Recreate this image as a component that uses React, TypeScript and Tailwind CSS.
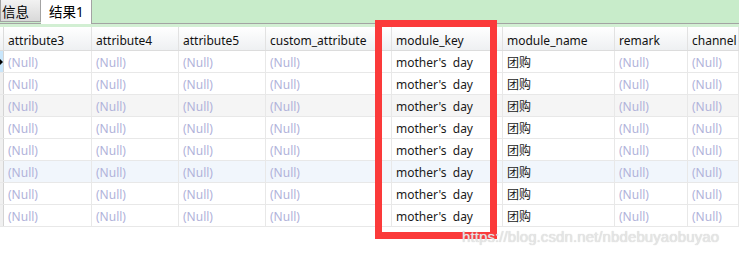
import React from 'react';

const FONT = { fontFamily: '"Noto Sans", "Noto Sans CJK SC", sans-serif' };

const columns = [
    { key: 'attribute3', w: 'w-[88px]' },
    { key: 'attribute4', w: 'w-[87px]' },
    { key: 'attribute5', w: 'w-[87px]' },
    { key: 'custom_attribute', w: 'w-[126px]' },
    { key: 'module_key', w: 'w-[111px]' },
    { key: 'module_name', w: 'w-[112px]' },
    { key: 'remark', w: 'w-[73px]' },
    { key: 'channel', w: 'flex-1' },
];

const rowBg = ['bg-white', 'bg-white', 'bg-[#f5f5f5]', 'bg-white', 'bg-white', 'bg-[#f1f6fc]', 'bg-white', 'bg-white'];

const cellValue = (key: string) => {
    if (key === 'module_key') return <span className="text-[#1a1a1a] whitespace-pre">mother's  day</span>;
    if (key === 'module_name') return <span className="text-[#1a1a1a]">团购</span>;
    return <span className="text-[#b0b2da]">(Null)</span>;
};

const App: React.FC = () => {
    return (
        <div className="relative w-[739px] h-[256px] bg-white overflow-hidden text-[12px]" style={FONT}>
            {/* tabs */}
            <div className="flex h-[24px] bg-[#c8ecca] border-b border-[#a3a3a3]">
                <div className="w-[41px] h-[22px] flex items-center pl-[1px] pt-[3px] bg-gradient-to-b from-[#f2f2f2] to-[#d9d9d9] border border-[#a3a3a3] border-t-0 text-[13.5px] text-black">
                    信息
                </div>
                <div className="w-[51px] h-[24px] flex items-center pl-[8px] pt-[1px] bg-white border-r border-[#a3a3a3] text-[13.5px] text-black">
                    结果1
                </div>
            </div>
            <div className="h-[3px] bg-[#d2efd3]" />

            {/* header */}
            <div className="flex h-[24px] bg-gradient-to-b from-white to-[#eef0f2] border-b border-[#dcdcdc]">
                <div className="w-[4px] border-r border-[#dcdcdc]" />
                {columns.map(c => (
                    <div key={c.key} className={`${c.w} shrink-0 border-r border-[#e2e2e2] pl-[4px] pt-[4px] flex items-center text-[#111]`}>
                        {c.key}
                    </div>
                ))}
            </div>

            {/* rows */}
            {rowBg.map((bg, i) => (
                <div key={i} className={`flex h-[22px] border-b border-[#e8e8e8] ${bg}`}>
                    <div className={`w-[4px] border-r border-[#d4d4d4] ${i === 0 ? 'bg-[#c9e6fb]' : 'bg-[#f0f0f0]'} flex items-center`}>
                        {i === 0 && <div className="w-0 h-0 border-y-[3px] border-y-transparent border-l-[3px] border-l-black" />}
                    </div>
                    {columns.map(c => (
                        <div key={c.key} className={`${c.w} shrink-0 border-r border-[#e8e8e8] pl-[4px] pt-[2px] flex items-center`}>
                            {cellValue(c.key)}
                        </div>
                    ))}
                </div>
            ))}

            {/* red highlight box */}
            <div className="absolute left-[375px] top-[20px] w-[122px] h-[219px] border-[7px] border-[#fb3a3a]" />

            {/* watermark */}
            <div className="absolute left-[462px] top-[226px] text-[15px] text-[#e6e6e6] tracking-[0.1px]" style={{ fontFamily: '"Liberation Sans", sans-serif', textShadow: '0 0 1px #c8c8c8' }}>
                https://blog.csdn.net/nbdebuyaobuyao
            </div>
        </div>
    );
};

export default App;
